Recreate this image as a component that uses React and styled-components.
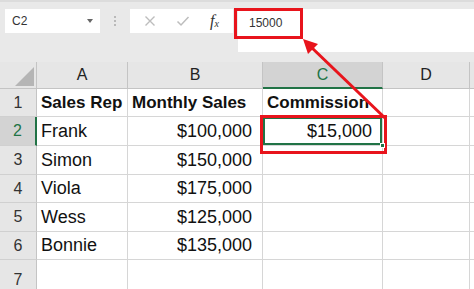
import React from "react";
import styled, { createGlobalStyle } from "styled-components";

const Global = createGlobalStyle`
  html, body { margin: 0; padding: 0; background: #e9e9e9; }
  * { box-sizing: border-box; }
`;

const Frame = styled.div`
  position: relative;
  width: 474px;
  height: 289px;
  overflow: hidden;
  background: #e9e9e9;
  font-family: "Liberation Sans", Arial, sans-serif;
  border-top: 2px solid #dcdcdc;
`;

const Toolbar = styled.div`
  display: flex;
  align-items: flex-start;
  height: 60px;
  padding: 7px 0 0 5px;
`;

const NameBox = styled.div`
  width: 95px;
  height: 24px;
  background: #fff;
  display: flex;
  align-items: center;
  justify-content: space-between;
  padding: 0 7px 0 7px;
  font-size: 12px;
  color: #333;
`;

const Caret = styled.span`
  width: 0;
  height: 0;
  border-left: 3.5px solid transparent;
  border-right: 3.5px solid transparent;
  border-top: 4px solid #666;
`;

const Dots = styled.div`
  width: 30px;
  height: 24px;
  display: flex;
  flex-direction: column;
  align-items: center;
  justify-content: center;
  gap: 2px;
  & > span {
    width: 2px;
    height: 2px;
    background: #a8a8a8;
    border-radius: 1px;
  }
`;

const Buttons = styled.div`
  width: 103px;
  height: 24px;
  background: #fff;
  display: flex;
  align-items: center;
  justify-content: space-around;
  padding: 0 4px 0 4px;
`;

const Fx = styled.span`
  font-family: "Liberation Serif", serif;
  font-style: italic;
  font-size: 16px;
  color: #333;
  & sub { font-size: 10px; vertical-align: -1px; }
`;

const FormulaInput = styled.div`
  margin-left: 5px;
  flex: 1;
  height: 43px;
  background: #fff;
  padding: 7px 0 0 11px;
  font-size: 12px;
  color: #333;
`;

const Grid = styled.div`
  display: grid;
  grid-template-columns: 37px 91px 135px 120px 87px 1fr;
  grid-template-rows: 27px 28px 29px 29px 28px 29px 28px 40px;
  background: #fff;
`;

const Corner = styled.div`
  position: relative;
  background: #e6e6e6;
  border-right: 1px solid #c4c4c4;
  border-bottom: 1px solid #c4c4c4;
`;

const ColHead = styled.div`
  background: ${(p) => (p.$sel ? "#d3d3d3" : "#e6e6e6")};
  border-right: 1px solid #c4c4c4;
  border-bottom: ${(p) => (p.$sel ? "2px solid #217346" : "1px solid #c4c4c4")};
  color: ${(p) => (p.$sel ? "#217346" : "#222")};
  font-size: 16px;
  display: flex;
  align-items: center;
  justify-content: center;
  padding-top: ${(p) => (p.$sel ? "1px" : "0")};
`;

const RowHead = styled.div`
  background: ${(p) => (p.$sel ? "#d3d3d3" : "#e6e6e6")};
  border-right: ${(p) => (p.$sel ? "2px solid #217346" : "1px solid #c4c4c4")};
  border-bottom: 1px solid #d0d0d0;
  color: ${(p) => (p.$sel ? "#217346" : "#333")};
  font-size: 16px;
  display: flex;
  align-items: center;
  justify-content: center;
`;

const Cell = styled.div`
  position: relative;
  border-right: 1px solid #d6d6d6;
  border-bottom: 1px solid #d6d6d6;
  font-size: ${(p) => (p.$bold ? "17px" : "18px")};
  font-weight: ${(p) => (p.$bold ? 700 : 400)};
  color: #111;
  display: flex;
  align-items: center;
  justify-content: ${(p) => (p.$num ? "flex-end" : "flex-start")};
  padding: ${(p) => (p.$num ? "0 10px 0 0" : "0 0 0 4px")};
  white-space: nowrap;
  overflow: visible;
  ${(p) => (p.$active ? "box-shadow: inset 0 0 0 2px #217346;" : "")}
`;

const Handle = styled.span`
  position: absolute;
  right: -3px;
  bottom: -3px;
  width: 5px;
  height: 5px;
  background: #217346;
  border: 1px solid #fff;
  z-index: 2;
`;

const Overlay = styled.svg`
  position: absolute;
  left: 0;
  top: 0;
  pointer-events: none;
`;

const rows = [
  [{ t: "Sales Rep", b: true }, { t: "Monthly Sales", b: true }, { t: "Commission", b: true }],
  [{ t: "Frank" }, { t: "$100,000", n: true }, { t: "$15,000", n: true, a: true }],
  [{ t: "Simon" }, { t: "$150,000", n: true }, { t: "" }],
  [{ t: "Viola" }, { t: "$175,000", n: true }, { t: "" }],
  [{ t: "Wess" }, { t: "$125,000", n: true }, { t: "" }],
  [{ t: "Bonnie" }, { t: "$135,000", n: true }, { t: "" }],
  [{ t: "" }, { t: "" }, { t: "" }],
  [{ t: "" }, { t: "" }, { t: "" }],
];

export default function App() {
  return (
    <Frame>
      <Global />
      <Toolbar>
        <NameBox>
          C2
          <Caret />
        </NameBox>
        <Dots>
          <span />
          <span />
          <span />
        </Dots>
        <Buttons>
          <svg width="12" height="12" viewBox="0 0 12 12">
            <path d="M1.5 1.5 L10.5 10.5 M10.5 1.5 L1.5 10.5" stroke="#bdbdbd" strokeWidth="1.4" fill="none" />
          </svg>
          <svg width="14" height="12" viewBox="0 0 14 12">
            <path d="M1.5 6.5 L5 10 L12.5 2" stroke="#bdbdbd" strokeWidth="1.5" fill="none" />
          </svg>
          <Fx>
            f<sub>x</sub>
          </Fx>
        </Buttons>
        <FormulaInput>15000</FormulaInput>
      </Toolbar>
      <Grid>
        <Corner>
          <svg width="37" height="27" style={{ position: "absolute", left: 0, top: 0 }}>
            <polygon points="15,24 34,24 34,5" fill="#b5b5b5" />
          </svg>
        </Corner>
        <ColHead>A</ColHead>
        <ColHead>B</ColHead>
        <ColHead $sel>C</ColHead>
        <ColHead>D</ColHead>
        <ColHead />
        {rows.map((r, i) => (
          <React.Fragment key={i}>
            <RowHead $sel={i === 1}>{i < 7 ? i + 1 : ""}</RowHead>
            {r.map((c, j) => (
              <Cell key={j} $bold={c.b} $num={c.n} $active={c.a}>
                {c.t}
                {c.a && <Handle />}
              </Cell>
            ))}
            <Cell />
            <Cell />
          </React.Fragment>
        ))}
      </Grid>
      <Overlay width="474" height="289" viewBox="0 0 474 289">
        <rect x="235.5" y="7.5" width="66" height="28" fill="none" stroke="#e8141c" strokeWidth="3" />
        <rect x="261.5" y="114.5" width="124" height="36" fill="none" stroke="#e8141c" strokeWidth="3" />
        <line x1="385" y1="116" x2="310" y2="44" stroke="#e8141c" strokeWidth="3" />
        <polygon points="303,37 318,42 308,52" fill="#e8141c" />
      </Overlay>
    </Frame>
  );
}
